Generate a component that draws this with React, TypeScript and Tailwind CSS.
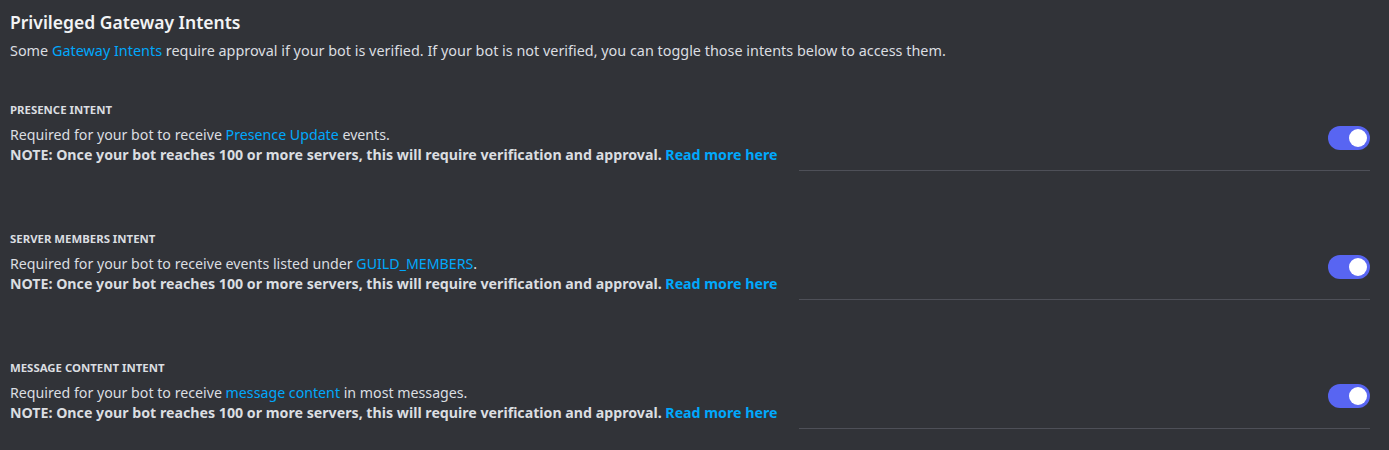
import React from 'react';

type Intent = {
  title: string;
  before: string;
  link: string;
  after: string;
};

const intents: Intent[] = [
  { title: 'Presence Intent', before: 'Required for your bot to receive ', link: 'Presence Update', after: ' events.' },
  { title: 'Server Members Intent', before: 'Required for your bot to receive events listed under ', link: 'GUILD_MEMBERS', after: '.' },
  { title: 'Message Content Intent', before: 'Required for your bot to receive ', link: 'message content', after: ' in most messages.' },
];

function Toggle() {
  return (
    <div className="w-[42px] h-[24px] rounded-full bg-[#5865f2] flex items-center justify-end px-[3px] shrink-0">
      <div className="w-[18px] h-[18px] rounded-full bg-white" />
    </div>
  );
}

export default function App() {
  return (
    <div
      className="w-[1389px] h-[450px] bg-[#313338] text-[#dbdee1] overflow-hidden px-[10px] pt-[9px]"
      style={{ fontFamily: '"Noto Sans", "Open Sans", sans-serif' }}
    >
      <h2 className="text-[17.5px] leading-[26px] font-semibold text-[#f2f3f5]">Privileged Gateway Intents</h2>
      <p className="text-[14.4px] leading-[20px] mt-[6px]">
        Some <span className="text-[#00a8fc]">Gateway Intents</span> require approval if your bot is verified. If your
        bot is not verified, you can toggle those intents below to access them.
      </p>

      <div className="mt-[42px] flex flex-col gap-[61px] pr-[9px]">
        {intents.map((intent) => (
          <section key={intent.title}>
            <div className="flex items-center justify-between">
              <div>
                <h3 className="text-[11.4px] leading-[14px] font-bold uppercase text-[#dbdee1]">{intent.title}</h3>
                <p className="text-[14.2px] leading-[20px] mt-[8px]">
                  {intent.before}
                  <span className="text-[#00a8fc]">{intent.link}</span>
                  {intent.after}
                </p>
                <p className="text-[14.2px] leading-[20px] font-bold">
                  NOTE: Once your bot reaches 100 or more servers, this will require verification and approval.{' '}
                  <span className="text-[#00a8fc]">Read more here</span>
                </p>
              </div>
              <div className="pt-[8px]">
                <Toggle />
              </div>
            </div>
            <div className="ml-[789px] mt-[5px] h-px bg-[#4e5058]" />
          </section>
        ))}
      </div>
    </div>
  );
}
